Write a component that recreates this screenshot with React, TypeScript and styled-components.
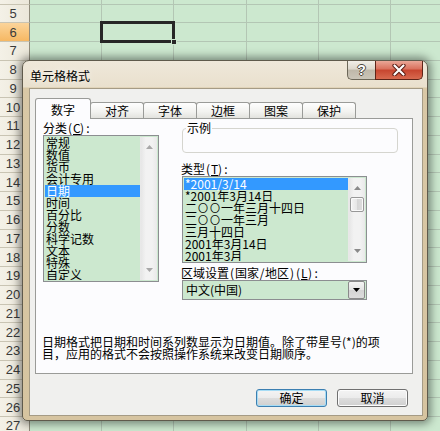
import React from "react";
import styled, { createGlobalStyle } from "styled-components";

const Global = createGlobalStyle`
  html, body { margin: 0; padding: 0; width: 440px; height: 431px; overflow: hidden; background: #cce8cf; }
  body { font-family: "Noto Sans CJK SC", "Liberation Sans", sans-serif; font-size: 12px; color: #000; }
  * { box-sizing: border-box; }
`;

const Screen = styled.div`
  position: relative;
  width: 440px;
  height: 431px;
  overflow: hidden;
  background: #cce8cf;
`;

/* ---------- spreadsheet ---------- */
const Sheet = styled.div`
  display: flex;
  flex-direction: column;
  margin-top: -14.25px;
`;

const SheetRow = styled.div`
  display: flex;
  height: 18.75px;
  flex: none;
`;

const RowHeader = styled.div<{ $active?: boolean }>`
  width: 30px;
  flex: none;
  border-right: 1px solid #8f8b7c;
  border-bottom: 1px solid #c9c4b3;
  background: ${(p) =>
    p.$active ? "linear-gradient(#fbd49a, #f6b863)" : "linear-gradient(90deg, #f4f1e7, #ebe7da)"};
  font: 13px "Liberation Sans", Arial, sans-serif;
  color: #3a3a3a;
  display: flex;
  align-items: center;
  justify-content: center;
  padding-right: 3px;
`;

const Cell = styled.div`
  width: 72.2px;
  flex: none;
  position: relative;
  border-right: 1px solid #b3c6b4;
  border-bottom: 1px solid #b3c6b4;
`;

const SelectionBox = styled.div`
  position: absolute;
  left: -2px;
  top: -2px;
  right: -2px;
  bottom: -2px;
  border: 3px solid #262626;
  z-index: 1;
`;

const FillHandle = styled.div`
  position: absolute;
  right: -4px;
  bottom: -4px;
  width: 6px;
  height: 6px;
  background: #262626;
  border: 1px solid #cce8cf;
  z-index: 2;
`;

/* ---------- dialog window ---------- */
const Window = styled.div`
  position: absolute;
  left: 22px;
  top: 60px;
  width: 406px;
  height: 361px;
  border: 1px solid #5f5a4c;
  border-radius: 7px 7px 5px 5px;
  background: linear-gradient(#efe8da 0px, #e9e0cd 26px, #d9c8a6 27px, #d6c4a0 100%);
  box-shadow: 0 0 9px 3px rgba(0, 0, 0, 0.42);
  display: flex;
  flex-direction: column;
  padding: 0 4px 4px 6px;
`;

const TitleBar = styled.div`
  display: flex;
  justify-content: space-between;
  align-items: flex-start;
  height: 27px;
  flex: none;
`;

const TitleText = styled.div`
  margin: 9px 0 0 1px;
  font-size: 12px;
  line-height: 12px;
  color: #000;
  text-shadow: 0 0 6px rgba(255, 255, 255, 0.9);
`;

const CaptionButtons = styled.div`
  display: flex;
`;

const HelpButton = styled.div`
  width: 28px;
  height: 19px;
  border: 1px solid #6c6758;
  border-top: none;
  border-right: none;
  border-radius: 0 0 0 5px;
  background: linear-gradient(#f1eee7 0%, #dcd7cc 45%, #bfb8a9 50%, #cbc5b8 100%);
  display: flex;
  align-items: center;
  justify-content: center;
  font: bold 14px "Liberation Sans", Arial, sans-serif;
  color: #fff;
  text-shadow: 1px 0 0 #4b463b, -1px 0 0 #4b463b, 0 1px 0 #4b463b, 0 -1px 0 #4b463b;
`;

const CloseButton = styled.div`
  width: 48px;
  height: 19px;
  border: 1px solid #5d2418;
  border-top: none;
  border-radius: 0 0 5px 0;
  background: linear-gradient(#eaa797 0%, #d9705c 45%, #c7452f 50%, #d86a4f 100%);
  display: flex;
  align-items: center;
  justify-content: center;
`;

const Content = styled.div`
  flex: 1;
  background: #f0f0ee;
  border: 1px solid #a59b85;
  display: flex;
  flex-direction: column;
  padding: 9px 9px 0 5px;
`;

/* ---------- tabs ---------- */
const TabStrip = styled.div`
  display: flex;
  align-items: flex-end;
  height: 20px;
  flex: none;
`;

const Tab = styled.div<{ $selected?: boolean }>`
  flex: none;
  display: flex;
  align-items: center;
  justify-content: center;
  font-size: 12px;
  line-height: 12px;
  border: 1px solid #9a9b98;
  border-bottom: none;
  border-radius: 3px 3px 0 0;
  position: relative;
  width: ${(p) => (p.$selected ? "56px" : "54px")};
  height: ${(p) => (p.$selected ? "21px" : "16px")};
  margin-bottom: ${(p) => (p.$selected ? "-1px" : "0")};
  margin-left: ${(p) => (p.$selected ? "0" : "-1px")};
  z-index: ${(p) => (p.$selected ? 2 : 1)};
  background: ${(p) => (p.$selected ? "#fcfcfe" : "linear-gradient(#fefefe, #f2f2ef 60%, #e3e3de)")};
  padding-top: 1px;
`;

const Panel = styled.div`
  height: 256px;
  flex: none;
  border: 1px solid #9a9b98;
  background: #fcfcfe;
  padding: 3px 8px 0 7px;
  display: flex;
  flex-direction: column;
`;

const PanelBody = styled.div`
  display: grid;
  grid-template-columns: 116px 217px;
  column-gap: 22px;
  align-items: start;
  height: 179px;
`;

const Column = styled.div`
  display: flex;
  flex-direction: column;
`;

const Label = styled.div<{ $gap?: number }>`
  font-size: 12px;
  line-height: 12px;
  height: 12px;
  white-space: nowrap;
  margin-top: ${(p) => p.$gap ?? 0}px;
  margin-bottom: 1px;
  & u { text-decoration: underline; text-underline-offset: 1px; }
`;

/* half-width (SimSun-like) slot for ASCII punctuation in labels */
const Half = styled.span`
  display: inline-block;
  width: 6px;
  text-align: center;
`;

const ListBox = styled.div<{ $w: number; $h: number }>`
  width: ${(p) => p.$w}px;
  height: ${(p) => p.$h}px;
  margin-left: ${(p) => (p.$w > 150 ? "1px" : "0")};
  border: 1px solid #8c8e91;
  background: #cce8cf;
  padding: 1px;
  display: flex;
`;

const Items = styled.div`
  flex: 1;
  display: flex;
  flex-direction: column;
  overflow: hidden;
`;

const Item = styled.div<{ $selected?: boolean }>`
  height: 12px;
  line-height: 12px;
  font-size: 12px;
  padding-left: 1px;
  white-space: nowrap;
  background: ${(p) => (p.$selected ? "#3399ff" : "transparent")};
  color: ${(p) => (p.$selected ? "#fff" : "#000")};
`;

const Circle = styled.span`
  display: inline-block;
  width: 12px;
  height: 12px;
  line-height: 12px;
  text-align: center;
  font-size: 10px;
  vertical-align: top;
  overflow: hidden;
`;

const ScrollBar = styled.div`
  width: 17px;
  flex: none;
  display: flex;
  flex-direction: column;
  background: linear-gradient(90deg, #e6e6e6, #f2f2f2 30%, #f2f2f2 70%, #e9e9e9);
  border-left: 1px solid #e8e8e8;
`;

const ScrollArrow = styled.div<{ $down?: boolean }>`
  height: 17px;
  flex: none;
  display: flex;
  justify-content: center;
  align-items: ${(p) => (p.$down ? "flex-start" : "flex-end")};
  padding: ${(p) => (p.$down ? "5px 0 0" : "0 0 5px")};
`;

const ScrollTrack = styled.div`
  flex: 1;
  padding: 2px 1px 0;
`;

const Thumb = styled.div`
  width: 14px;
  height: 15px;
  border: 1px solid #989898;
  border-radius: 2px;
  background: linear-gradient(90deg, #f4f4f4, #e6e6e6 50%, #d6d6d6 51%, #dedede);
  box-shadow: inset 0 0 0 1px #fafafa;
`;

const GroupBox = styled.fieldset`
  width: 216px;
  margin: 0 0 0 1px;
  padding: 0 3px;
  border: 1px solid #d5d5cf;
  border-radius: 4px;
  min-width: 0;
`;

const GroupLegend = styled.legend`
  padding: 0 1px;
  font-size: 12px;
  line-height: 12px;
`;

const GroupInner = styled.div`
  height: 18px;
`;

const Combo = styled.div`
  width: 185px;
  height: 20px;
  margin-left: 1px;
  border: 1px solid #8c8e91;
  background: #cce8cf;
  display: flex;
  align-items: center;
  justify-content: space-between;
  padding: 0 1px 0 3px;
  font-size: 12px;
  line-height: 12px;
`;

const DropButton = styled.div`
  width: 17px;
  height: 18px;
  border: 1px solid #8a8a8a;
  border-radius: 2px;
  background: linear-gradient(#f5f5f5, #e4e4e4 50%, #d4d4d4 51%, #dcdcdc);
  display: flex;
  align-items: center;
  justify-content: center;
`;

const Description = styled.div`
  margin: 35px 0 0 -1px;
  font-size: 12px;
  line-height: 12px;
  white-space: nowrap;
`;

const Footer = styled.div`
  display: flex;
  justify-content: flex-end;
  gap: 10px;
  padding: 15px 5px 0 0;
`;

const Button = styled.div<{ $default?: boolean }>`
  width: 71px;
  height: 18px;
  border: 1px solid ${(p) => (p.$default ? "#3c7fb1" : "#707070")};
  border-radius: 3px;
  background: linear-gradient(#f4f4f4, #ebebeb 50%, #dddddd 51%, #cfcfcf);
  box-shadow: ${(p) => (p.$default ? "inset 0 0 0 1px #a6dcf5" : "inset 0 0 0 1px #fcfcfc")};
  display: flex;
  align-items: center;
  justify-content: center;
  font-size: 12px;
  line-height: 12px;
`;

/* ---------- helpers ---------- */
const TypeText = ({ text }: { text: string }) => (
  <>
    {text.split(/(〇+)/).map((part, i) =>
      part.startsWith("〇") ? (
        Array.from(part).map((ch, j) => <Circle key={`${i}-${j}`}>{ch}</Circle>)
      ) : (
        <React.Fragment key={i}>{part}</React.Fragment>
      )
    )}
  </>
);

/* ---------- icons ---------- */
const Arrow = ({ down, color }: { down?: boolean; color: string }) => (
  <svg width="7" height="4" viewBox="0 0 7 4">
    {down ? <polygon points="0,0 7,0 3.5,4" fill={color} /> : <polygon points="0,4 7,4 3.5,0" fill={color} />}
  </svg>
);

const CloseGlyph = () => (
  <svg width="14" height="12" viewBox="0 0 14 12">
    <path d="M2.5 1.5 L11.5 10.5 M11.5 1.5 L2.5 10.5" stroke="#5a1c12" strokeWidth="4.2" strokeLinecap="round" />
    <path d="M2.5 1.5 L11.5 10.5 M11.5 1.5 L2.5 10.5" stroke="#ffffff" strokeWidth="2.2" strokeLinecap="round" />
  </svg>
);

/* ---------- data ---------- */
const sheetRows = Array.from({ length: 25 }, (_, i) => i + 4);
const tabs = ["数字", "对齐", "字体", "边框", "图案", "保护"];
const categories = ["常规", "数值", "货币", "会计专用", "日期", "时间", "百分比", "分数", "科学记数", "文本", "特殊", "自定义"];
const types = ["*2001/3/14", "*2001年3月14日", "二〇〇一年三月十四日", "二〇〇一年三月", "三月十四日", "2001年3月14日", "2001年3月"];

export default function App() {
  return (
    <Screen>
      <Global />
      <Sheet>
        {sheetRows.map((r) => (
          <SheetRow key={r}>
            <RowHeader $active={r === 6}>{r}</RowHeader>
            {Array.from({ length: 6 }, (_, c) => (
              <Cell key={c}>
                {r === 6 && c === 1 && (
                  <>
                    <SelectionBox />
                    <FillHandle />
                  </>
                )}
              </Cell>
            ))}
          </SheetRow>
        ))}
      </Sheet>

      <Window>
        <TitleBar>
          <TitleText>单元格格式</TitleText>
          <CaptionButtons>
            <HelpButton>?</HelpButton>
            <CloseButton>
              <CloseGlyph />
            </CloseButton>
          </CaptionButtons>
        </TitleBar>
        <Content>
          <TabStrip>
            {tabs.map((t, i) => (
              <Tab key={t} $selected={i === 0}>
                {t}
              </Tab>
            ))}
          </TabStrip>
          <Panel>
            <PanelBody>
              <Column>
                <Label>
                  分类<Half>(</Half>
                  <Half>
                    <u>C</u>
                  </Half>
                  <Half>)</Half>
                  <Half>:</Half>
                </Label>
                <ListBox $w={116} $h={147}>
                  <Items>
                    {categories.map((c, i) => (
                      <Item key={c} $selected={i === 4}>
                        {c}
                      </Item>
                    ))}
                  </Items>
                  <ScrollBar>
                    <ScrollArrow>
                      <Arrow color="#a8a8a8" />
                    </ScrollArrow>
                    <ScrollTrack />
                    <ScrollArrow $down>
                      <Arrow down color="#a8a8a8" />
                    </ScrollArrow>
                  </ScrollBar>
                </ListBox>
              </Column>
              <Column>
                <GroupBox>
                  <GroupLegend>示例</GroupLegend>
                  <GroupInner />
                </GroupBox>
                <Label $gap={10}>
                  类型<Half>(</Half>
                  <Half>
                    <u>T</u>
                  </Half>
                  <Half>)</Half>
                  <Half>:</Half>
                </Label>
                <ListBox $w={185} $h={87}>
                  <Items>
                    {types.map((t, i) => (
                      <Item key={t} $selected={i === 0}>
                        <TypeText text={t} />
                      </Item>
                    ))}
                  </Items>
                  <ScrollBar>
                    <ScrollArrow>
                      <Arrow color="#8a8a8a" />
                    </ScrollArrow>
                    <ScrollTrack>
                      <Thumb />
                    </ScrollTrack>
                    <ScrollArrow $down>
                      <Arrow down color="#8a8a8a" />
                    </ScrollArrow>
                  </ScrollBar>
                </ListBox>
                <Label $gap={4}>
                  区域设置<Half>(</Half>国家<Half>/</Half>地区<Half>)</Half>
                  <Half>(</Half>
                  <Half>
                    <u>L</u>
                  </Half>
                  <Half>)</Half>
                  <Half>:</Half>
                </Label>
                <Combo>
                  <span>中文(中国)</span>
                  <DropButton>
                    <Arrow down color="#000" />
                  </DropButton>
                </Combo>
              </Column>
            </PanelBody>
            <Description>
              日期格式把日期和时间系列数显示为日期值。除了带星号(*)的项
              <br />
              目，应用的格式不会按照操作系统来改变日期顺序。
            </Description>
          </Panel>
          <Footer>
            <Button $default>确定</Button>
            <Button>取消</Button>
          </Footer>
        </Content>
      </Window>
    </Screen>
  );
}
